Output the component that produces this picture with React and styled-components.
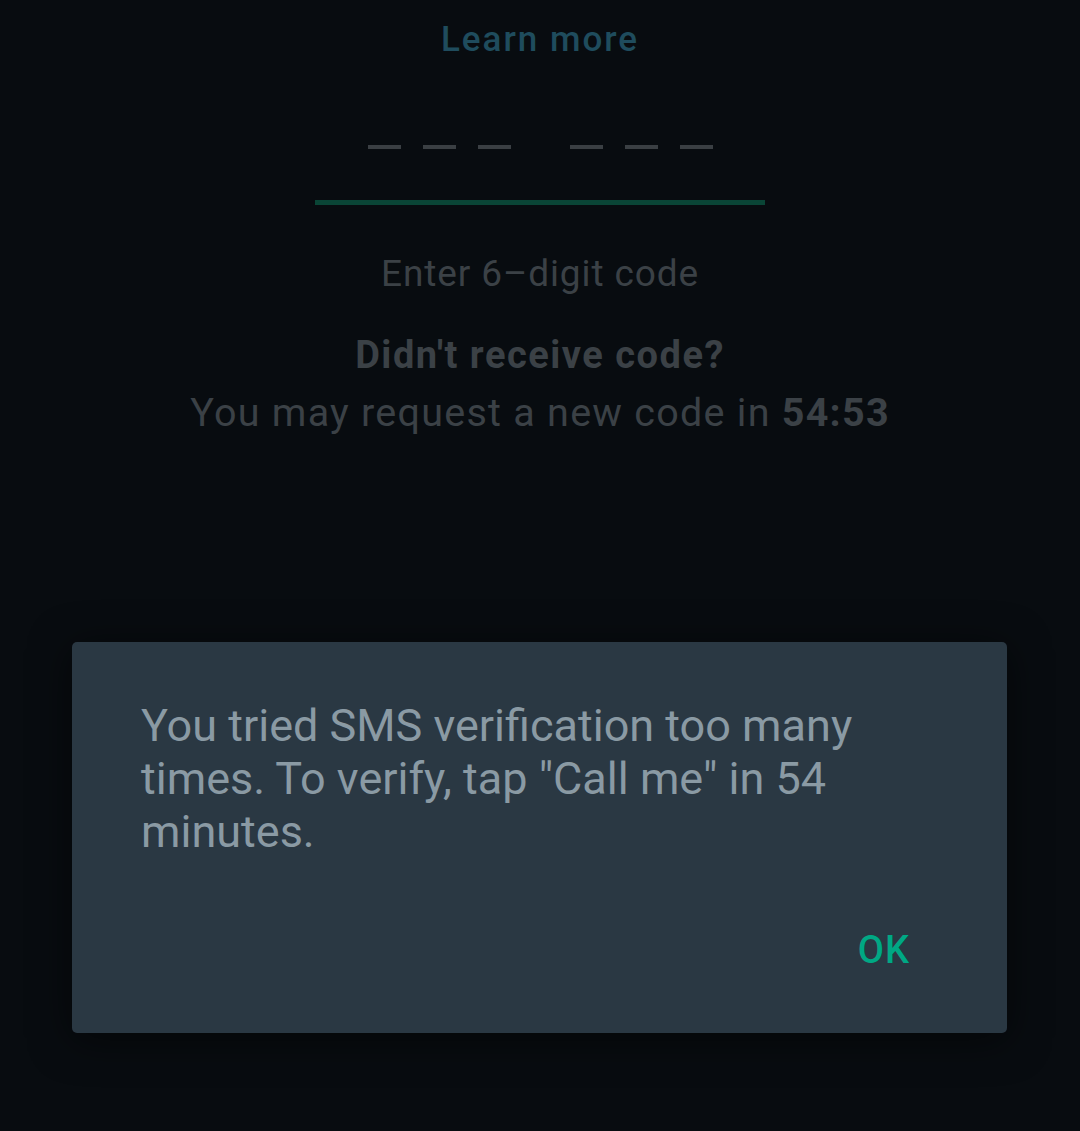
import React from 'react';
import styled, { createGlobalStyle } from 'styled-components';

const GlobalStyle = createGlobalStyle`
  html, body {
    margin: 0;
    padding: 0;
    background: #080c10;
    font-family: Roboto, "Noto Sans", "Liberation Sans", sans-serif;
  }
`;

const Screen = styled.div`
  position: relative;
  width: 1080px;
  height: 1131px;
  overflow: hidden;
  background: #080c10;
  display: flex;
  flex-direction: column;
  align-items: center;
`;

const LearnMore = styled.a`
  margin-top: 16px;
  font-size: 35px;
  font-weight: 500;
  letter-spacing: 2px;
  line-height: 48px;
  color: #1f4c5d;
  text-decoration: none;
`;

const CodeField = styled.div`
  margin-top: 58px;
  width: 450px;
  height: 4px;
  padding: 23px 0 51px;
  border-bottom: 5px solid #0a4536;
  display: flex;
  justify-content: center;
  gap: 59px;
`;

const DashGroup = styled.div`
  display: flex;
  gap: 22px;
`;

const Dash = styled.span`
  width: 33px;
  height: 4px;
  background: #3a3f43;
`;

const Hint = styled.div`
  margin-top: 48px;
  font-size: 37px;
  letter-spacing: 0.9px;
  line-height: 42px;
  color: #3b4146;
`;

const Question = styled.div`
  margin-top: 37px;
  font-size: 38px;
  font-weight: 700;
  letter-spacing: 1.5px;
  line-height: 46px;
  color: #3b4146;
`;

const Countdown = styled.div`
  margin-top: 12px;
  font-size: 39.5px;
  letter-spacing: 1.25px;
  line-height: 46px;
  color: #3b4146;

  b {
    font-weight: 700;
  }
`;

const Overlay = styled.div`
  position: absolute;
  inset: 0;
  display: flex;
  flex-direction: column;
  justify-content: flex-end;
  padding: 0 73px 98px 72px;
`;

const Dialog = styled.div`
  height: 391px;
  box-sizing: border-box;
  background: #2a3843;
  border-radius: 5px;
  box-shadow: 0 6px 40px rgba(0, 0, 0, 0.55);
  padding: 57px 69px 0 69px;
  display: flex;
  flex-direction: column;
`;

const Message = styled.p`
  margin: 0;
  font-size: 45px;
  line-height: 53px;
  color: #8a9aa4;
`;

const Actions = styled.div`
  margin-top: auto;
  display: flex;
  justify-content: flex-end;
  padding: 0 28px 58px 0;
`;

const OkButton = styled.button`
  background: none;
  border: none;
  padding: 0;
  font-family: inherit;
  font-size: 38px;
  font-weight: 500;
  letter-spacing: 1px;
  line-height: 50px;
  color: #00a884;
`;

export default function App() {
  return (
    <>
      <GlobalStyle />
      <Screen>
        <LearnMore href="#">Learn more</LearnMore>
        <CodeField>
          <DashGroup>
            <Dash />
            <Dash />
            <Dash />
          </DashGroup>
          <DashGroup>
            <Dash />
            <Dash />
            <Dash />
          </DashGroup>
        </CodeField>
        <Hint>Enter 6–digit code</Hint>
        <Question>Didn't receive code?</Question>
        <Countdown>
          You may request a new code in <b>54:53</b>
        </Countdown>
        <Overlay>
          <Dialog>
            <Message>
              You tried SMS verification too many times. To verify, tap "Call me" in 54 minutes.
            </Message>
            <Actions>
              <OkButton>OK</OkButton>
            </Actions>
          </Dialog>
        </Overlay>
      </Screen>
    </>
  );
}
